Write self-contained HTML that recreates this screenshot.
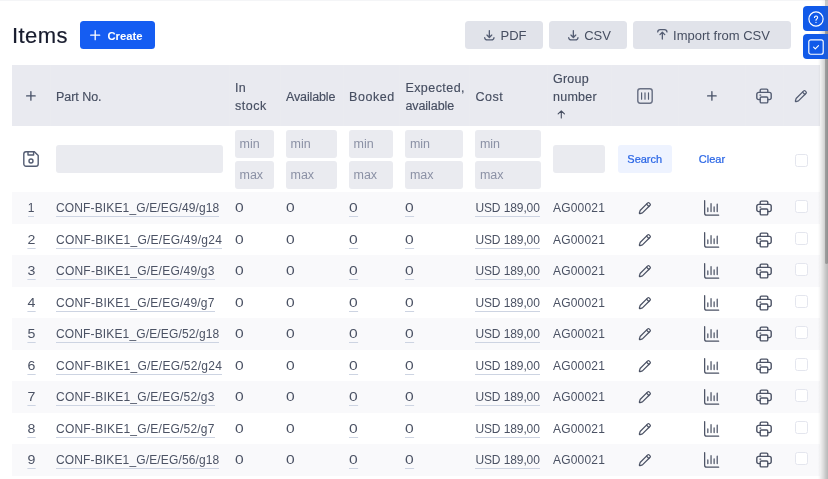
<!DOCTYPE html>
<html lang="en">
<head>
<meta charset="utf-8">
<title>Items</title>
<style>
*{box-sizing:border-box;margin:0;padding:0}
html,body{width:828px;height:479px;overflow:hidden;background:#fff}
body{font-family:"Liberation Sans",sans-serif;font-size:12px;color:#4b5264;position:relative}
.page{position:absolute;left:0;top:0;width:828px;height:479px;overflow:hidden;will-change:transform}
.topline{position:absolute;left:0;top:0;width:828px;height:1px;background:#f4f5f7}
h1{position:absolute;left:12px;top:22px;height:28px;line-height:28px;font-size:22px;font-weight:400;color:#181c2e;letter-spacing:.4px;-webkit-text-stroke:.2px #181c2e}
.btn{position:absolute;top:21px;height:28px;border-radius:3.5px;display:flex;align-items:center;justify-content:center;white-space:nowrap;border:0;font-family:inherit}
.btn-primary{left:80px;width:75px;background:#155df2;color:#fff;font-weight:700;font-size:11.3px;justify-content:flex-start;padding-left:9.5px}
.btn-primary svg{margin-right:5.5px;position:relative;top:.5px;left:-.35px}
.btn-primary span{position:relative;top:.5px}
.btn-gray{background:#e1e3ea;color:#464e61;font-size:13px;font-weight:400;padding-left:2px}
.btn-gray svg{margin-right:6.3px;color:#535c72;position:relative;top:.4px;left:.4px}
.btn-gray.up svg{top:-.25px}
.fab{position:absolute;left:803px;width:25px;height:25px;background:linear-gradient(90deg,#115ae9 0,#115ae9 21px,#1c5cd8 22.5px);border-radius:4px 0 0 4px;display:flex;align-items:center;justify-content:center}
.grid{position:absolute;left:12px;top:65px;width:808px}
.row{display:flex;width:808px}
.cell{flex:none;display:flex;align-items:center;padding:0 6px;white-space:nowrap}
.c{justify-content:center}
.head{height:61px;background:#e9eaf0;color:#464e61;font-size:12.5px;line-height:18px;letter-spacing:.25px;-webkit-text-stroke:.15px #464e61}
.head .cell{padding-top:3.5px}
.head .cell.c{padding-top:0}
.arr{display:block;margin:4.5px 0 0 4px}
.head .cell{white-space:normal}
.head .cell+.cell{box-shadow:inset 1px 0 0 rgba(255,255,255,.06)}
.filter{height:66px;background:#fff}
.inp{display:block;outline:0;margin:0;appearance:none;-webkit-appearance:none;width:100%;height:28px;border-radius:3px;background:#eaebf0;border:0;font-family:inherit;font-size:12.5px;color:#8b91a5;padding:0 4.5px;line-height:28px}
.stack{display:block;width:100%}
.inp::placeholder{color:#8b91a5;opacity:1}
.stack .inp+.inp{margin-top:3px}
.filter .cell{padding:0 6px}
.sbtn{border:0;padding:0;margin:0;font-family:inherit;width:54px;height:28px;border-radius:3px;background:#eef3ff;color:#2a66e6;font-size:11px;font-weight:400;display:flex;align-items:center;justify-content:center;-webkit-text-stroke:.22px #2a66e6}
.clear{border:0;padding:0;margin:0;background:none;font-family:inherit;color:#2a66e6;font-size:11px;-webkit-text-stroke:.22px #2a66e6;padding-left:1px}
.cb{appearance:none;-webkit-appearance:none;margin:0;padding:0;flex:none;display:block;width:13px;height:13px;border:1px solid #e4e6ee;border-radius:2.5px;background:#fff}
.filter .cb{position:relative;top:1px}
.data{height:31.5px;font-size:12px}
.data .cell{padding-top:3.6px}
.data .cell.ic{padding-top:.8px}
.data.odd{background:#f9f9fb}
a{color:inherit;text-decoration:none}
.u{border-bottom:1px solid #cdd4e2;padding-bottom:1px;display:inline-block;line-height:13px}
.n{display:inline-block;line-height:13px;padding-bottom:2px}
.data .cell{color:#4b5264}
.data .cell.cbw{align-items:flex-start;padding-top:8px}
.num{transform:scaleX(1.18)}
.cost{letter-spacing:-.1px}
.grp{letter-spacing:.2px}
.z{transform:scaleX(1.3);transform-origin:0 50%}
.shadow{position:absolute;left:818px;top:6px;width:10px;height:473px;background:linear-gradient(90deg,rgba(0,0,0,0) 0,rgba(0,0,0,.03) 1.5px,rgba(0,0,0,.085) 3.5px,rgba(0,0,0,.14) 5.5px,rgba(0,0,0,.21) 7.5px,rgba(0,0,0,.28) 10px)}
.shadow2{position:absolute;left:821px;top:0;width:4px;height:6px;background:linear-gradient(90deg,rgba(0,0,0,0),rgba(0,0,0,.05))}
.thumb{position:absolute;left:825px;top:0;width:3px;height:264px;background:rgba(0,0,0,.22);border-radius:0 0 1.5px 1.5px}
svg{display:block;flex:none;overflow:visible}
.ic{color:#535c72}
.ic.dk{color:#465066}
</style>
</head>
<body>
<div class="page">
<div class="topline"></div>
<h1>Items</h1>
<button class="btn btn-primary"><svg width="12.4" height="12.4" viewBox="0 0 16 16" fill="none" stroke="currentColor" stroke-width="1.7" stroke-linecap="round" stroke-linejoin="round"><path d="M8 2.2v11.6M2.2 8h11.6"/></svg><span>Create</span></button>
<button class="btn btn-gray" style="left:465px;width:78px"><svg width="10.7" height="10.7" viewBox="0 0 12 12" fill="none" stroke="currentColor" stroke-width="1.45" stroke-linecap="round" stroke-linejoin="round"><path d="M6 .7v7.500M3.300 5.700L6 8.400l2.700 -2.700M.8 8.700q.2 2.500 2.900 2.500h4.600q2.700 0 2.900 -2.500"/></svg><span>PDF</span></button>
<button class="btn btn-gray" style="left:549px;width:78px"><svg width="10.7" height="10.7" viewBox="0 0 12 12" fill="none" stroke="currentColor" stroke-width="1.45" stroke-linecap="round" stroke-linejoin="round"><path d="M6 .7v7.500M3.300 5.700L6 8.400l2.700 -2.700M.8 8.700q.2 2.500 2.900 2.500h4.600q2.700 0 2.900 -2.500"/></svg><span>CSV</span></button>
<button class="btn btn-gray up" style="left:633px;width:158px"><svg width="10.7" height="10.7" viewBox="0 0 12 12" fill="none" stroke="currentColor" stroke-width="1.45" stroke-linecap="round" stroke-linejoin="round"><path d="M6 11.300V3.800M3.300 6.300L6 3.600l2.700 2.700M.8 3.300q.2 -2.500 2.900 -2.500h4.600q2.700 0 2.900 2.500"/></svg><span>Import from CSV</span></button>
<div class="grid" role="table">
<div class="row head" role="row"><div class="cell c ic dk" role="columnheader" style="width:38px;"><svg width="11.8" height="11.8" viewBox="0 0 16 16" fill="none" stroke="currentColor" stroke-width="1.75" stroke-linecap="round" stroke-linejoin="round"><path d="M8 2.2v11.6M2.2 8h11.6"/></svg></div><div class="cell " role="columnheader" style="width:179px;"><span style="letter-spacing:-0.04px">Part No.</span></div><div class="cell " role="columnheader" style="width:51px;"><span><span style="letter-spacing:0.25px">In</span><br><span style="letter-spacing:0.5px">stock</span></span></div><div class="cell " role="columnheader" style="width:63px;"><span style="letter-spacing:-0.13px">Available</span></div><div class="cell " role="columnheader" style="width:56.39999999999998px;"><span style="letter-spacing:0.55px">Booked</span></div><div class="cell " role="columnheader" style="width:70.0px;"><span><span style="letter-spacing:0.44px">Expected,</span><br><span style="letter-spacing:-0.06px">available</span></span></div><div class="cell " role="columnheader" style="width:77.60000000000002px;"><span style="letter-spacing:0.55px">Cost</span></div><div class="cell " role="columnheader" style="width:64.5px;padding-top:0;padding-bottom:2.5px"><span>Group<br>number<svg width="8.6" height="8.6" viewBox="0 0 9 9" fill="none" stroke="currentColor" stroke-width="1.15" stroke-linecap="round" stroke-linejoin="round" class="arr"><path d="M4.5 8.400V.9M1.200 4.100L4.500 .8l3.300 3.300"/></svg></span></div><div class="cell c ic" role="columnheader" style="width:66.5px;"><svg width="16" height="16" viewBox="0 0 16 16" fill="none" stroke="currentColor" stroke-width="1.15" stroke-linecap="round" stroke-linejoin="round"><rect x=".8" y=".8" width="14.400" height="14.400" rx="2.400" stroke-width="1.45" stroke-opacity=".85"/><path d="M4.600 4.800v6.400M8 4.800v6.400M11.500 4.800v6.400"/></svg></div><div class="cell c ic dk" role="columnheader" style="width:67px;"><svg width="11.8" height="11.8" viewBox="0 0 16 16" fill="none" stroke="currentColor" stroke-width="1.75" stroke-linecap="round" stroke-linejoin="round"><path d="M8 2.2v11.6M2.2 8h11.6"/></svg></div><div class="cell c ic" role="columnheader" style="width:38px;"><svg width="16" height="16" viewBox="0 0 16 16" fill="none" stroke="currentColor" stroke-width="1.4" stroke-linecap="round" stroke-linejoin="round"><path d="M4.2 4.4V2.3a1.2 1.2 0 0 1 1.2 -1.2h5.2a1.2 1.2 0 0 1 1.2 1.2v2.1"/><path d="M4.2 11.6H2.6A1.8 1.8 0 0 1 .8 9.8V6.2a1.8 1.8 0 0 1 1.8 -1.8h10.8a1.8 1.8 0 0 1 1.8 1.8v3.600a1.8 1.8 0 0 1 -1.8 1.8h-1.600"/><rect x="4.2" y="9" width="7.6" height="5.9" rx="1.2"/><path d="M4 7.1h.7"/></svg></div><div class="cell c ic" role="columnheader" style="width:37px;"><svg width="16" height="16" viewBox="0 0 16 16" fill="none" stroke="currentColor" stroke-width="1.25" stroke-linecap="round" stroke-linejoin="round"><g transform="translate(7.45 8.55) rotate(45)"><path d="M-1.65 -6.3a1 1 0 0 1 1 -1h1.3a1 1 0 0 1 1 1V4.5L.45 6.700q-.45 .6 -.9 0L-1.650 4.500z"/><path d="M-1.65 -4.600h3.300"/></g></svg></div></div>
<div class="row filter" role="row"><div class="cell c ic" role="cell" style="width:38px;"><svg width="16" height="16" viewBox="0 0 16 16" fill="none" stroke="currentColor" stroke-width="1.4" stroke-linecap="round" stroke-linejoin="round"><path d="M3 .8h8.4l3.8 3.800v8.400a2.200 2.200 0 0 1 -2.200 2.200H3A2.200 2.200 0 0 1 .8 13V3A2.200 2.200 0 0 1 3 .8z"/><path d="M5 .8v3.200h5.600V.8"/><circle cx="8" cy="10" r="2"/></svg></div><div class="cell " role="cell" style="width:179px;"><input class="inp" type="text" aria-label="Part No."></div><div class="cell " role="cell" style="width:51px;"><span class="stack"><input class="inp" type="text" placeholder="min"><input class="inp" type="text" placeholder="max"></span></div><div class="cell " role="cell" style="width:63px;"><span class="stack"><input class="inp" type="text" placeholder="min"><input class="inp" type="text" placeholder="max"></span></div><div class="cell " role="cell" style="width:56.39999999999998px;"><span class="stack"><input class="inp" type="text" placeholder="min"><input class="inp" type="text" placeholder="max"></span></div><div class="cell " role="cell" style="width:70.0px;"><span class="stack"><input class="inp" type="text" placeholder="min"><input class="inp" type="text" placeholder="max"></span></div><div class="cell " role="cell" style="width:77.60000000000002px;"><span class="stack"><input class="inp" type="text" placeholder="min"><input class="inp" type="text" placeholder="max"></span></div><div class="cell " role="cell" style="width:64.5px;"><input class="inp" type="text" aria-label="Group number"></div><div class="cell c" role="cell" style="width:66.5px;"><button class="sbtn" type="button">Search</button></div><div class="cell c" role="cell" style="width:67px;"><button class="clear" type="button">Clear</button></div><div class="cell " role="cell" style="width:38px;"></div><div class="cell c" role="cell" style="width:37px;"><input class="cb" type="checkbox"></div></div>
<div class="row data odd" role="row"><div class="cell c" role="cell" style="width:38px;"><a class="u">1</a></div><div class="cell " role="cell" style="width:179px;"><a class="u" style="letter-spacing:0.14px">CONF-BIKE1_G/E/EG/49/g18</a></div><div class="cell " role="cell" style="width:51px;"><span class="n z">0</span></div><div class="cell " role="cell" style="width:63px;"><span class="n z">0</span></div><div class="cell " role="cell" style="width:56.39999999999998px;"><a class="u z">0</a></div><div class="cell " role="cell" style="width:70.0px;"><a class="u z">0</a></div><div class="cell " role="cell" style="width:77.60000000000002px;"><a class="u cost">USD 189,00</a></div><div class="cell " role="cell" style="width:64.5px;"><span class="n grp">AG00021</span></div><div class="cell c ic" role="cell" style="width:66.5px;"><svg width="16" height="16" viewBox="0 0 16 16" fill="none" stroke="currentColor" stroke-width="1.25" stroke-linecap="round" stroke-linejoin="round"><g transform="translate(7.45 8.55) rotate(45)"><path d="M-1.65 -6.3a1 1 0 0 1 1 -1h1.3a1 1 0 0 1 1 1V4.5L.45 6.700q-.45 .6 -.9 0L-1.650 4.500z"/><path d="M-1.65 -4.600h3.300"/></g></svg></div><div class="cell c ic ch" role="cell" style="width:67px;"><svg width="16" height="16" viewBox="0 0 16 16" fill="none" stroke="currentColor" stroke-width="1.25" stroke-linecap="round" stroke-linejoin="round"><path d="M1.65 .6v12.6a2 2 0 0 0 2 2h12"/><path d="M4.8 8.1v3.5M8.05 3.8v7.8M11.15 7v4.6M14.25 4.2v7.4" stroke-width="1.5" stroke-opacity=".82"/></svg></div><div class="cell c ic" role="cell" style="width:38px;"><svg width="16" height="16" viewBox="0 0 16 16" fill="none" stroke="currentColor" stroke-width="1.4" stroke-linecap="round" stroke-linejoin="round"><path d="M4.2 4.4V2.3a1.2 1.2 0 0 1 1.2 -1.2h5.2a1.2 1.2 0 0 1 1.2 1.2v2.1"/><path d="M4.2 11.6H2.6A1.8 1.8 0 0 1 .8 9.8V6.2a1.8 1.8 0 0 1 1.8 -1.8h10.8a1.8 1.8 0 0 1 1.8 1.8v3.600a1.8 1.8 0 0 1 -1.8 1.8h-1.600"/><rect x="4.2" y="9" width="7.6" height="5.9" rx="1.2"/><path d="M4 7.1h.7"/></svg></div><div class="cell c cbw" role="cell" style="width:37px;"><input class="cb" type="checkbox"></div></div>
<div class="row data " role="row"><div class="cell c" role="cell" style="width:38px;"><a class="u num">2</a></div><div class="cell " role="cell" style="width:179px;"><a class="u" style="letter-spacing:0.25px">CONF-BIKE1_G/E/EG/49/g24</a></div><div class="cell " role="cell" style="width:51px;"><span class="n z">0</span></div><div class="cell " role="cell" style="width:63px;"><span class="n z">0</span></div><div class="cell " role="cell" style="width:56.39999999999998px;"><a class="u z">0</a></div><div class="cell " role="cell" style="width:70.0px;"><a class="u z">0</a></div><div class="cell " role="cell" style="width:77.60000000000002px;"><a class="u cost">USD 189,00</a></div><div class="cell " role="cell" style="width:64.5px;"><span class="n grp">AG00021</span></div><div class="cell c ic" role="cell" style="width:66.5px;"><svg width="16" height="16" viewBox="0 0 16 16" fill="none" stroke="currentColor" stroke-width="1.25" stroke-linecap="round" stroke-linejoin="round"><g transform="translate(7.45 8.55) rotate(45)"><path d="M-1.65 -6.3a1 1 0 0 1 1 -1h1.3a1 1 0 0 1 1 1V4.5L.45 6.700q-.45 .6 -.9 0L-1.650 4.500z"/><path d="M-1.65 -4.600h3.300"/></g></svg></div><div class="cell c ic ch" role="cell" style="width:67px;"><svg width="16" height="16" viewBox="0 0 16 16" fill="none" stroke="currentColor" stroke-width="1.25" stroke-linecap="round" stroke-linejoin="round"><path d="M1.65 .6v12.6a2 2 0 0 0 2 2h12"/><path d="M4.8 8.1v3.5M8.05 3.8v7.8M11.15 7v4.6M14.25 4.2v7.4" stroke-width="1.5" stroke-opacity=".82"/></svg></div><div class="cell c ic" role="cell" style="width:38px;"><svg width="16" height="16" viewBox="0 0 16 16" fill="none" stroke="currentColor" stroke-width="1.4" stroke-linecap="round" stroke-linejoin="round"><path d="M4.2 4.4V2.3a1.2 1.2 0 0 1 1.2 -1.2h5.2a1.2 1.2 0 0 1 1.2 1.2v2.1"/><path d="M4.2 11.6H2.6A1.8 1.8 0 0 1 .8 9.8V6.2a1.8 1.8 0 0 1 1.8 -1.8h10.8a1.8 1.8 0 0 1 1.8 1.8v3.600a1.8 1.8 0 0 1 -1.8 1.8h-1.600"/><rect x="4.2" y="9" width="7.6" height="5.9" rx="1.2"/><path d="M4 7.1h.7"/></svg></div><div class="cell c cbw" role="cell" style="width:37px;"><input class="cb" type="checkbox"></div></div>
<div class="row data odd" role="row"><div class="cell c" role="cell" style="width:38px;"><a class="u num">3</a></div><div class="cell " role="cell" style="width:179px;"><a class="u" style="letter-spacing:0.23px">CONF-BIKE1_G/E/EG/49/g3</a></div><div class="cell " role="cell" style="width:51px;"><span class="n z">0</span></div><div class="cell " role="cell" style="width:63px;"><span class="n z">0</span></div><div class="cell " role="cell" style="width:56.39999999999998px;"><a class="u z">0</a></div><div class="cell " role="cell" style="width:70.0px;"><a class="u z">0</a></div><div class="cell " role="cell" style="width:77.60000000000002px;"><a class="u cost">USD 189,00</a></div><div class="cell " role="cell" style="width:64.5px;"><span class="n grp">AG00021</span></div><div class="cell c ic" role="cell" style="width:66.5px;"><svg width="16" height="16" viewBox="0 0 16 16" fill="none" stroke="currentColor" stroke-width="1.25" stroke-linecap="round" stroke-linejoin="round"><g transform="translate(7.45 8.55) rotate(45)"><path d="M-1.65 -6.3a1 1 0 0 1 1 -1h1.3a1 1 0 0 1 1 1V4.5L.45 6.700q-.45 .6 -.9 0L-1.650 4.500z"/><path d="M-1.65 -4.600h3.300"/></g></svg></div><div class="cell c ic ch" role="cell" style="width:67px;"><svg width="16" height="16" viewBox="0 0 16 16" fill="none" stroke="currentColor" stroke-width="1.25" stroke-linecap="round" stroke-linejoin="round"><path d="M1.65 .6v12.6a2 2 0 0 0 2 2h12"/><path d="M4.8 8.1v3.5M8.05 3.8v7.8M11.15 7v4.6M14.25 4.2v7.4" stroke-width="1.5" stroke-opacity=".82"/></svg></div><div class="cell c ic" role="cell" style="width:38px;"><svg width="16" height="16" viewBox="0 0 16 16" fill="none" stroke="currentColor" stroke-width="1.4" stroke-linecap="round" stroke-linejoin="round"><path d="M4.2 4.4V2.3a1.2 1.2 0 0 1 1.2 -1.2h5.2a1.2 1.2 0 0 1 1.2 1.2v2.1"/><path d="M4.2 11.6H2.6A1.8 1.8 0 0 1 .8 9.8V6.2a1.8 1.8 0 0 1 1.8 -1.8h10.8a1.8 1.8 0 0 1 1.8 1.8v3.600a1.8 1.8 0 0 1 -1.8 1.8h-1.600"/><rect x="4.2" y="9" width="7.6" height="5.9" rx="1.2"/><path d="M4 7.1h.7"/></svg></div><div class="cell c cbw" role="cell" style="width:37px;"><input class="cb" type="checkbox"></div></div>
<div class="row data " role="row"><div class="cell c" role="cell" style="width:38px;"><a class="u num">4</a></div><div class="cell " role="cell" style="width:179px;"><a class="u" style="letter-spacing:0.23px">CONF-BIKE1_G/E/EG/49/g7</a></div><div class="cell " role="cell" style="width:51px;"><span class="n z">0</span></div><div class="cell " role="cell" style="width:63px;"><span class="n z">0</span></div><div class="cell " role="cell" style="width:56.39999999999998px;"><a class="u z">0</a></div><div class="cell " role="cell" style="width:70.0px;"><a class="u z">0</a></div><div class="cell " role="cell" style="width:77.60000000000002px;"><a class="u cost">USD 189,00</a></div><div class="cell " role="cell" style="width:64.5px;"><span class="n grp">AG00021</span></div><div class="cell c ic" role="cell" style="width:66.5px;"><svg width="16" height="16" viewBox="0 0 16 16" fill="none" stroke="currentColor" stroke-width="1.25" stroke-linecap="round" stroke-linejoin="round"><g transform="translate(7.45 8.55) rotate(45)"><path d="M-1.65 -6.3a1 1 0 0 1 1 -1h1.3a1 1 0 0 1 1 1V4.5L.45 6.700q-.45 .6 -.9 0L-1.650 4.500z"/><path d="M-1.65 -4.600h3.300"/></g></svg></div><div class="cell c ic ch" role="cell" style="width:67px;"><svg width="16" height="16" viewBox="0 0 16 16" fill="none" stroke="currentColor" stroke-width="1.25" stroke-linecap="round" stroke-linejoin="round"><path d="M1.65 .6v12.6a2 2 0 0 0 2 2h12"/><path d="M4.8 8.1v3.5M8.05 3.8v7.8M11.15 7v4.6M14.25 4.2v7.4" stroke-width="1.5" stroke-opacity=".82"/></svg></div><div class="cell c ic" role="cell" style="width:38px;"><svg width="16" height="16" viewBox="0 0 16 16" fill="none" stroke="currentColor" stroke-width="1.4" stroke-linecap="round" stroke-linejoin="round"><path d="M4.2 4.4V2.3a1.2 1.2 0 0 1 1.2 -1.2h5.2a1.2 1.2 0 0 1 1.2 1.2v2.1"/><path d="M4.2 11.6H2.6A1.8 1.8 0 0 1 .8 9.8V6.2a1.8 1.8 0 0 1 1.8 -1.8h10.8a1.8 1.8 0 0 1 1.8 1.8v3.600a1.8 1.8 0 0 1 -1.8 1.8h-1.600"/><rect x="4.2" y="9" width="7.6" height="5.9" rx="1.2"/><path d="M4 7.1h.7"/></svg></div><div class="cell c cbw" role="cell" style="width:37px;"><input class="cb" type="checkbox"></div></div>
<div class="row data odd" role="row"><div class="cell c" role="cell" style="width:38px;"><a class="u num">5</a></div><div class="cell " role="cell" style="width:179px;"><a class="u" style="letter-spacing:0.14px">CONF-BIKE1_G/E/EG/52/g18</a></div><div class="cell " role="cell" style="width:51px;"><span class="n z">0</span></div><div class="cell " role="cell" style="width:63px;"><span class="n z">0</span></div><div class="cell " role="cell" style="width:56.39999999999998px;"><a class="u z">0</a></div><div class="cell " role="cell" style="width:70.0px;"><a class="u z">0</a></div><div class="cell " role="cell" style="width:77.60000000000002px;"><a class="u cost">USD 189,00</a></div><div class="cell " role="cell" style="width:64.5px;"><span class="n grp">AG00021</span></div><div class="cell c ic" role="cell" style="width:66.5px;"><svg width="16" height="16" viewBox="0 0 16 16" fill="none" stroke="currentColor" stroke-width="1.25" stroke-linecap="round" stroke-linejoin="round"><g transform="translate(7.45 8.55) rotate(45)"><path d="M-1.65 -6.3a1 1 0 0 1 1 -1h1.3a1 1 0 0 1 1 1V4.5L.45 6.700q-.45 .6 -.9 0L-1.650 4.500z"/><path d="M-1.65 -4.600h3.300"/></g></svg></div><div class="cell c ic ch" role="cell" style="width:67px;"><svg width="16" height="16" viewBox="0 0 16 16" fill="none" stroke="currentColor" stroke-width="1.25" stroke-linecap="round" stroke-linejoin="round"><path d="M1.65 .6v12.6a2 2 0 0 0 2 2h12"/><path d="M4.8 8.1v3.5M8.05 3.8v7.8M11.15 7v4.6M14.25 4.2v7.4" stroke-width="1.5" stroke-opacity=".82"/></svg></div><div class="cell c ic" role="cell" style="width:38px;"><svg width="16" height="16" viewBox="0 0 16 16" fill="none" stroke="currentColor" stroke-width="1.4" stroke-linecap="round" stroke-linejoin="round"><path d="M4.2 4.4V2.3a1.2 1.2 0 0 1 1.2 -1.2h5.2a1.2 1.2 0 0 1 1.2 1.2v2.1"/><path d="M4.2 11.6H2.6A1.8 1.8 0 0 1 .8 9.8V6.2a1.8 1.8 0 0 1 1.8 -1.8h10.8a1.8 1.8 0 0 1 1.8 1.8v3.600a1.8 1.8 0 0 1 -1.8 1.8h-1.600"/><rect x="4.2" y="9" width="7.6" height="5.9" rx="1.2"/><path d="M4 7.1h.7"/></svg></div><div class="cell c cbw" role="cell" style="width:37px;"><input class="cb" type="checkbox"></div></div>
<div class="row data " role="row"><div class="cell c" role="cell" style="width:38px;"><a class="u num">6</a></div><div class="cell " role="cell" style="width:179px;"><a class="u" style="letter-spacing:0.25px">CONF-BIKE1_G/E/EG/52/g24</a></div><div class="cell " role="cell" style="width:51px;"><span class="n z">0</span></div><div class="cell " role="cell" style="width:63px;"><span class="n z">0</span></div><div class="cell " role="cell" style="width:56.39999999999998px;"><a class="u z">0</a></div><div class="cell " role="cell" style="width:70.0px;"><a class="u z">0</a></div><div class="cell " role="cell" style="width:77.60000000000002px;"><a class="u cost">USD 189,00</a></div><div class="cell " role="cell" style="width:64.5px;"><span class="n grp">AG00021</span></div><div class="cell c ic" role="cell" style="width:66.5px;"><svg width="16" height="16" viewBox="0 0 16 16" fill="none" stroke="currentColor" stroke-width="1.25" stroke-linecap="round" stroke-linejoin="round"><g transform="translate(7.45 8.55) rotate(45)"><path d="M-1.65 -6.3a1 1 0 0 1 1 -1h1.3a1 1 0 0 1 1 1V4.5L.45 6.700q-.45 .6 -.9 0L-1.650 4.500z"/><path d="M-1.65 -4.600h3.300"/></g></svg></div><div class="cell c ic ch" role="cell" style="width:67px;"><svg width="16" height="16" viewBox="0 0 16 16" fill="none" stroke="currentColor" stroke-width="1.25" stroke-linecap="round" stroke-linejoin="round"><path d="M1.65 .6v12.6a2 2 0 0 0 2 2h12"/><path d="M4.8 8.1v3.5M8.05 3.8v7.8M11.15 7v4.6M14.25 4.2v7.4" stroke-width="1.5" stroke-opacity=".82"/></svg></div><div class="cell c ic" role="cell" style="width:38px;"><svg width="16" height="16" viewBox="0 0 16 16" fill="none" stroke="currentColor" stroke-width="1.4" stroke-linecap="round" stroke-linejoin="round"><path d="M4.2 4.4V2.3a1.2 1.2 0 0 1 1.2 -1.2h5.2a1.2 1.2 0 0 1 1.2 1.2v2.1"/><path d="M4.2 11.6H2.6A1.8 1.8 0 0 1 .8 9.8V6.2a1.8 1.8 0 0 1 1.8 -1.8h10.8a1.8 1.8 0 0 1 1.8 1.8v3.600a1.8 1.8 0 0 1 -1.8 1.8h-1.600"/><rect x="4.2" y="9" width="7.6" height="5.9" rx="1.2"/><path d="M4 7.1h.7"/></svg></div><div class="cell c cbw" role="cell" style="width:37px;"><input class="cb" type="checkbox"></div></div>
<div class="row data odd" role="row"><div class="cell c" role="cell" style="width:38px;"><a class="u num">7</a></div><div class="cell " role="cell" style="width:179px;"><a class="u" style="letter-spacing:0.23px">CONF-BIKE1_G/E/EG/52/g3</a></div><div class="cell " role="cell" style="width:51px;"><span class="n z">0</span></div><div class="cell " role="cell" style="width:63px;"><span class="n z">0</span></div><div class="cell " role="cell" style="width:56.39999999999998px;"><a class="u z">0</a></div><div class="cell " role="cell" style="width:70.0px;"><a class="u z">0</a></div><div class="cell " role="cell" style="width:77.60000000000002px;"><a class="u cost">USD 189,00</a></div><div class="cell " role="cell" style="width:64.5px;"><span class="n grp">AG00021</span></div><div class="cell c ic" role="cell" style="width:66.5px;"><svg width="16" height="16" viewBox="0 0 16 16" fill="none" stroke="currentColor" stroke-width="1.25" stroke-linecap="round" stroke-linejoin="round"><g transform="translate(7.45 8.55) rotate(45)"><path d="M-1.65 -6.3a1 1 0 0 1 1 -1h1.3a1 1 0 0 1 1 1V4.5L.45 6.700q-.45 .6 -.9 0L-1.650 4.500z"/><path d="M-1.65 -4.600h3.300"/></g></svg></div><div class="cell c ic ch" role="cell" style="width:67px;"><svg width="16" height="16" viewBox="0 0 16 16" fill="none" stroke="currentColor" stroke-width="1.25" stroke-linecap="round" stroke-linejoin="round"><path d="M1.65 .6v12.6a2 2 0 0 0 2 2h12"/><path d="M4.8 8.1v3.5M8.05 3.8v7.8M11.15 7v4.6M14.25 4.2v7.4" stroke-width="1.5" stroke-opacity=".82"/></svg></div><div class="cell c ic" role="cell" style="width:38px;"><svg width="16" height="16" viewBox="0 0 16 16" fill="none" stroke="currentColor" stroke-width="1.4" stroke-linecap="round" stroke-linejoin="round"><path d="M4.2 4.4V2.3a1.2 1.2 0 0 1 1.2 -1.2h5.2a1.2 1.2 0 0 1 1.2 1.2v2.1"/><path d="M4.2 11.6H2.6A1.8 1.8 0 0 1 .8 9.8V6.2a1.8 1.8 0 0 1 1.8 -1.8h10.8a1.8 1.8 0 0 1 1.8 1.8v3.600a1.8 1.8 0 0 1 -1.8 1.8h-1.600"/><rect x="4.2" y="9" width="7.6" height="5.9" rx="1.2"/><path d="M4 7.1h.7"/></svg></div><div class="cell c cbw" role="cell" style="width:37px;"><input class="cb" type="checkbox"></div></div>
<div class="row data " role="row"><div class="cell c" role="cell" style="width:38px;"><a class="u num">8</a></div><div class="cell " role="cell" style="width:179px;"><a class="u" style="letter-spacing:0.23px">CONF-BIKE1_G/E/EG/52/g7</a></div><div class="cell " role="cell" style="width:51px;"><span class="n z">0</span></div><div class="cell " role="cell" style="width:63px;"><span class="n z">0</span></div><div class="cell " role="cell" style="width:56.39999999999998px;"><a class="u z">0</a></div><div class="cell " role="cell" style="width:70.0px;"><a class="u z">0</a></div><div class="cell " role="cell" style="width:77.60000000000002px;"><a class="u cost">USD 189,00</a></div><div class="cell " role="cell" style="width:64.5px;"><span class="n grp">AG00021</span></div><div class="cell c ic" role="cell" style="width:66.5px;"><svg width="16" height="16" viewBox="0 0 16 16" fill="none" stroke="currentColor" stroke-width="1.25" stroke-linecap="round" stroke-linejoin="round"><g transform="translate(7.45 8.55) rotate(45)"><path d="M-1.65 -6.3a1 1 0 0 1 1 -1h1.3a1 1 0 0 1 1 1V4.5L.45 6.700q-.45 .6 -.9 0L-1.650 4.500z"/><path d="M-1.65 -4.600h3.300"/></g></svg></div><div class="cell c ic ch" role="cell" style="width:67px;"><svg width="16" height="16" viewBox="0 0 16 16" fill="none" stroke="currentColor" stroke-width="1.25" stroke-linecap="round" stroke-linejoin="round"><path d="M1.65 .6v12.6a2 2 0 0 0 2 2h12"/><path d="M4.8 8.1v3.5M8.05 3.8v7.8M11.15 7v4.6M14.25 4.2v7.4" stroke-width="1.5" stroke-opacity=".82"/></svg></div><div class="cell c ic" role="cell" style="width:38px;"><svg width="16" height="16" viewBox="0 0 16 16" fill="none" stroke="currentColor" stroke-width="1.4" stroke-linecap="round" stroke-linejoin="round"><path d="M4.2 4.4V2.3a1.2 1.2 0 0 1 1.2 -1.2h5.2a1.2 1.2 0 0 1 1.2 1.2v2.1"/><path d="M4.2 11.6H2.6A1.8 1.8 0 0 1 .8 9.8V6.2a1.8 1.8 0 0 1 1.8 -1.8h10.8a1.8 1.8 0 0 1 1.8 1.8v3.600a1.8 1.8 0 0 1 -1.8 1.8h-1.600"/><rect x="4.2" y="9" width="7.6" height="5.9" rx="1.2"/><path d="M4 7.1h.7"/></svg></div><div class="cell c cbw" role="cell" style="width:37px;"><input class="cb" type="checkbox"></div></div>
<div class="row data odd" role="row"><div class="cell c" role="cell" style="width:38px;"><a class="u num">9</a></div><div class="cell " role="cell" style="width:179px;"><a class="u" style="letter-spacing:0.14px">CONF-BIKE1_G/E/EG/56/g18</a></div><div class="cell " role="cell" style="width:51px;"><span class="n z">0</span></div><div class="cell " role="cell" style="width:63px;"><span class="n z">0</span></div><div class="cell " role="cell" style="width:56.39999999999998px;"><a class="u z">0</a></div><div class="cell " role="cell" style="width:70.0px;"><a class="u z">0</a></div><div class="cell " role="cell" style="width:77.60000000000002px;"><a class="u cost">USD 189,00</a></div><div class="cell " role="cell" style="width:64.5px;"><span class="n grp">AG00021</span></div><div class="cell c ic" role="cell" style="width:66.5px;"><svg width="16" height="16" viewBox="0 0 16 16" fill="none" stroke="currentColor" stroke-width="1.25" stroke-linecap="round" stroke-linejoin="round"><g transform="translate(7.45 8.55) rotate(45)"><path d="M-1.65 -6.3a1 1 0 0 1 1 -1h1.3a1 1 0 0 1 1 1V4.5L.45 6.700q-.45 .6 -.9 0L-1.650 4.500z"/><path d="M-1.65 -4.600h3.300"/></g></svg></div><div class="cell c ic ch" role="cell" style="width:67px;"><svg width="16" height="16" viewBox="0 0 16 16" fill="none" stroke="currentColor" stroke-width="1.25" stroke-linecap="round" stroke-linejoin="round"><path d="M1.65 .6v12.6a2 2 0 0 0 2 2h12"/><path d="M4.8 8.1v3.5M8.05 3.8v7.8M11.15 7v4.6M14.25 4.2v7.4" stroke-width="1.5" stroke-opacity=".82"/></svg></div><div class="cell c ic" role="cell" style="width:38px;"><svg width="16" height="16" viewBox="0 0 16 16" fill="none" stroke="currentColor" stroke-width="1.4" stroke-linecap="round" stroke-linejoin="round"><path d="M4.2 4.4V2.3a1.2 1.2 0 0 1 1.2 -1.2h5.2a1.2 1.2 0 0 1 1.2 1.2v2.1"/><path d="M4.2 11.6H2.6A1.8 1.8 0 0 1 .8 9.8V6.2a1.8 1.8 0 0 1 1.8 -1.8h10.8a1.8 1.8 0 0 1 1.8 1.8v3.600a1.8 1.8 0 0 1 -1.8 1.8h-1.600"/><rect x="4.2" y="9" width="7.6" height="5.9" rx="1.2"/><path d="M4 7.1h.7"/></svg></div><div class="cell c cbw" role="cell" style="width:37px;"><input class="cb" type="checkbox"></div></div>
</div>
<div class="shadow"></div>
<div class="shadow2"></div>
<div class="thumb"></div>
<div class="fab" style="top:6px"><svg width="16" height="16" viewBox="0 0 16 16" fill="none" stroke="#fff" stroke-width="1.15" stroke-linecap="round" stroke-linejoin="round"><circle cx="8" cy="8" r="7.1"/><path d="M6.5 6.5a1.55 1.55 0 1 1 2.3 1.4c-.5 .3 -.8 .7 -.8 1.300"/><path d="M8 11.300v.1"/></svg></div>
<div class="fab" style="top:34px"><svg width="16" height="16" viewBox="0 0 16 16" fill="none" stroke="#fff" stroke-width="1.15" stroke-linecap="round" stroke-linejoin="round"><rect x=".8" y=".8" width="14.400" height="14.400" rx="2"/><path d="M5.600 8.100l1.700 1.700 3.200 -3.200"/></svg></div>
</div>
</body>
</html>
